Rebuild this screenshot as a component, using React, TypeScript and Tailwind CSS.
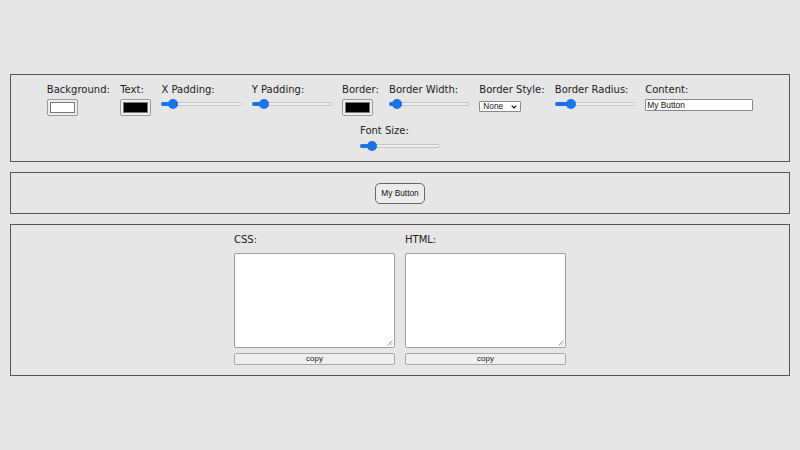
import React from "react";

const labelCls = "text-[10px] leading-[12px] text-[#222] whitespace-nowrap";

const Swatch = ({ color }: { color: string }) => (
  <div className="mt-[3px] w-[31px] h-[17px] border border-[#9a9a9a] bg-[#efefef] rounded-[2px] p-[2px]">
    <div className="w-full h-full border border-[#777]" style={{ background: color }} />
  </div>
);

const Slider = ({ offset, top = 3 }: { offset: number; top?: number }) => (
  <div className="relative w-[80px] h-[10px]" style={{ marginTop: top }}>
    <div className="absolute left-0 right-0 top-[3px] h-[4px] rounded-full bg-[#efefef] border border-[#c4c4c4]" />
    <div
      className="absolute left-0 top-[3px] h-[4px] rounded-full bg-[#1a73e8]"
      style={{ width: offset }}
    />
    <div
      className="absolute top-0 w-[10px] h-[10px] rounded-full bg-[#1a73e8]"
      style={{ left: offset - 5 }}
    />
  </div>
);

const Field = ({ label, children }: { label: string; children: React.ReactNode }) => (
  <div className="flex flex-col items-start">
    <div className={labelCls}>{label}</div>
    {children}
  </div>
);

const CodeBox = ({ label }: { label: string }) => (
  <div className="flex flex-col w-[161px]">
    <div className={labelCls}>{label}</div>
    <div className="relative mt-[7px] h-[95px] bg-white border border-[#9e9e9e] rounded-[2px]">
      <textarea className="w-full h-full resize-none outline-none bg-transparent" />
      <svg className="absolute right-[1px] bottom-[1px]" width="6" height="6" viewBox="0 0 6 6">
        <path d="M5.5 0.5 L0.5 5.5 M5.5 3 L3 5.5" stroke="#888" strokeWidth="0.8" />
      </svg>
    </div>
    <button className="mt-[5px] h-[12px] w-full bg-[#efefef] border border-[#a8a8a8] rounded-[2px] text-[8px] leading-[10px] text-[#222] font-['Liberation_Sans',Arial,sans-serif]">
      copy
    </button>
  </div>
);

export default function App() {
  return (
    <div className="min-h-[450px] bg-[#e6e6e6] pt-[74px] px-[10px] font-['DejaVu_Sans',sans-serif]">
      <div className="border border-[#555] px-[10px] pt-[9px] pb-[10px] flex flex-wrap justify-center gap-x-[10.3px] gap-y-[9px]">
        <Field label="Background:">
          <Swatch color="#ffffff" />
        </Field>
        <Field label="Text:">
          <Swatch color="#000000" />
        </Field>
        <Field label="X Padding:">
          <Slider offset={12} />
        </Field>
        <Field label="Y Padding:">
          <Slider offset={12} />
        </Field>
        <Field label="Border:">
          <Swatch color="#000000" />
        </Field>
        <Field label="Border Width:">
          <Slider offset={8} />
        </Field>
        <Field label="Border Style:">
          <div className="mt-[5px] w-[42px] h-[11px] bg-white border border-[#8a8a8a] rounded-[1px] flex items-center justify-between pl-[3px] pr-[3px] text-[8.3px] leading-none text-[#111] font-['Liberation_Sans',Arial,sans-serif]">
            <span>None</span>
            <svg width="6" height="4" viewBox="0 0 6 4">
              <path d="M0.7 0.7 L3 3 L5.3 0.7" fill="none" stroke="#111" strokeWidth="1.2" />
            </svg>
          </div>
        </Field>
        <Field label="Border Radius:">
          <Slider offset={16} />
        </Field>
        <Field label="Content:">
          <div className="mt-[3px] w-[108px] h-[12px] bg-white border border-[#8a8a8a] rounded-[1px] flex items-center pl-[1px] text-[8.4px] leading-none text-[#111] font-['Liberation_Sans',Arial,sans-serif]">
            My Button
          </div>
        </Field>
        <Field label="Font Size:">
          <Slider offset={12} top={4} />
        </Field>
      </div>

      <div className="mt-[10px] border border-[#555] h-[42px] flex items-center justify-center">
        <button className="w-[50px] h-[21px] rounded-[5px] border border-[#666] bg-[#ececec] text-[8.3px] text-[#111] font-['Liberation_Sans',Arial,sans-serif]">
          My Button
        </button>
      </div>

      <div className="mt-[10px] border border-[#555] pt-[9px] pb-[10px] flex justify-center gap-[10px]">
        <CodeBox label="CSS:" />
        <CodeBox label="HTML:" />
      </div>
    </div>
  );
}
